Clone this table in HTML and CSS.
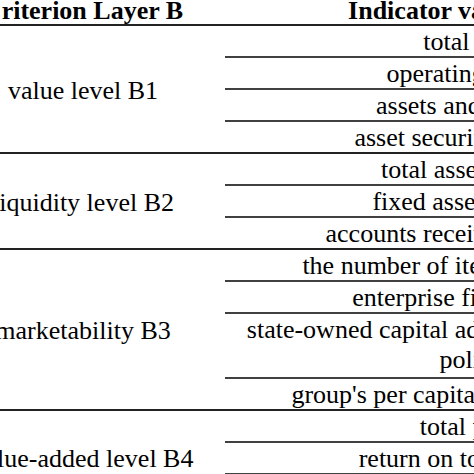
FILE: index.html
```html
<!DOCTYPE html>
<html lang="en">
<head>
<meta charset="utf-8">
<title>Evaluation index table</title>
<link rel="stylesheet" href="styles.css">
</head>
<body>
<div class="crop">
  <div class="tbl">
    <div class="hdr">
      <div class="hcell">Criterion Layer B</div>
      <div class="hcell">Indicator variable layer</div>
    </div>

    <div class="group">
      <div class="crit">value level B1</div>
      <div class="inds">
        <div class="ind">total assets</div>
        <div class="ind">operating revenue</div>
        <div class="ind">assets and liabilities</div>
        <div class="ind">asset securitization ratio</div>
      </div>
    </div>

    <div class="group">
      <div class="crit">liquidity level B2</div>
      <div class="inds">
        <div class="ind">total asset turnover</div>
        <div class="ind">fixed assets turnover</div>
        <div class="ind">accounts receivables turnover</div>
      </div>
    </div>

    <div class="group">
      <div class="crit">marketability B3</div>
      <div class="inds">
        <div class="ind">the number of items listed for sale</div>
        <div class="ind">enterprise financing cost</div>
        <div class="ind ind-2">state-owned capital adjustment and guidance policies</div>
        <div class="ind">group's per capita operating revenue</div>
      </div>
    </div>

    <div class="group">
      <div class="crit">value-added level B4</div>
      <div class="inds">
        <div class="ind">total profits</div>
        <div class="ind">return on total net asset</div>
        <div class="ind">net profit margin</div>
      </div>
    </div>
  </div>
</div>
</body>
</html>
```

FILE: styles.css
```css
html, body {
  margin: 0;
  padding: 0;
  background: #ffffff;
}

.crop {
  width: 474px;
  height: 474px;
  overflow: hidden;
}

.tbl {
  width: 794px;
  margin-left: -59px;
  margin-top: -5px;
  font-family: "Liberation Serif", "Times New Roman", serif;
  font-size: 26px;
  color: #000000;
}

.hdr {
  box-sizing: border-box;
  display: grid;
  grid-template-columns: 284px 510px;
  height: 29px;
  padding-top: 2px;
  line-height: 27px;
  font-weight: bold;
}

.hcell {
  text-align: center;
  white-space: nowrap;
}

.group {
  display: grid;
  grid-template-columns: 284px 510px;
}

.crit {
  border-top: 2px solid #222222;
  display: flex;
  align-items: center;
  justify-content: center;
  padding-top: 3px;
  line-height: 30px;
  white-space: nowrap;
}

.inds {
  display: flex;
  flex-direction: column;
}

.ind {
  box-sizing: border-box;
  height: 32.05px;
  border-top: 2px solid #404040;
  padding-top: 1px;
  line-height: 29px;
  text-align: center;
}

.ind:first-child {
  border-top-color: #222222;
}

.ind-2 {
  height: 64.1px;
  padding-top: 1px;
  line-height: 30px;
}
```
